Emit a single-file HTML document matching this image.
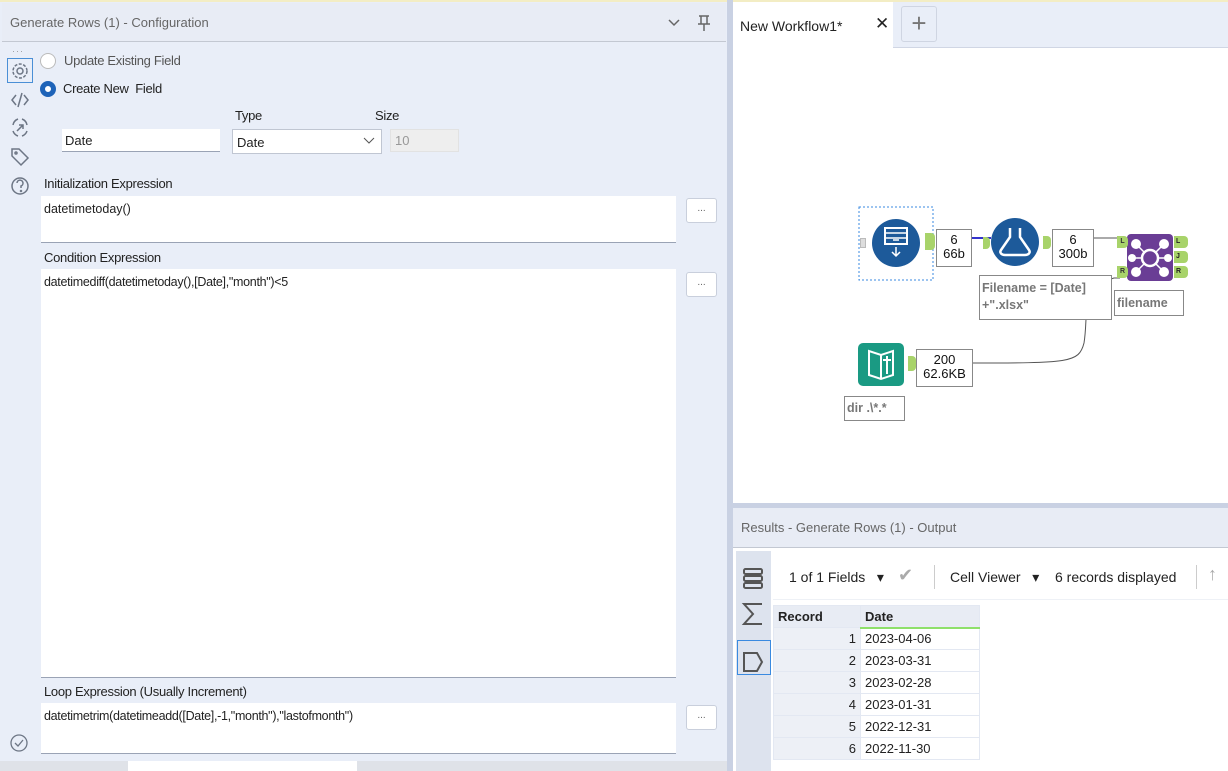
<!DOCTYPE html>
<html><head><meta charset="utf-8"><style>
*{box-sizing:border-box;margin:0;padding:0}
body{width:1228px;height:771px;overflow:hidden;background:#e9eef8;font-family:"Liberation Sans",sans-serif;font-size:13px;color:#222;position:relative}
.a{position:absolute}
.inp{position:absolute;background:#fff;border-bottom:1px solid #9aa3b5}
.btn{position:absolute;width:31px;height:25px;background:#fff;border:1px solid #c9cfdc;border-radius:3px;font-size:10px;color:#666;text-align:center;line-height:20px}
.lbl{position:absolute;font-size:13px;letter-spacing:-0.3px}
.ic{position:absolute;left:9px}
.box{position:absolute;background:#fff;border:1px solid #888;font-size:13px;text-align:center;line-height:14px;color:#111}
.port{position:absolute;background:#a8d36a;border-radius:0 4px 4px 0}
td{height:22px;border:1px solid #e3e8f2;font-size:13px}
</style></head><body>
<div class="a" style="left:0;top:0;width:1228px;height:2px;background:#f3edc4"></div>
<div class="a" style="left:2px;top:3px;width:724px;height:39px;background:#e8ecf5;border-bottom:1px solid #c3c8d2"></div>
<div class="a" style="left:10px;top:15px;font-size:13px;color:#666">Generate Rows (1) - Configuration</div>
<svg class="a" style="left:666px;top:14px" width="50" height="20"><path d="M3 6l5 5 5-5" stroke="#666" fill="none" stroke-width="1.5"/><path d="M33 2h10M35 2v8h6V2M32 10h12M38 10v7" stroke="#666" fill="none" stroke-width="1.5"/></svg>
<div class="a" style="left:12px;top:46px;font-size:9px;color:#999;letter-spacing:1px">···</div>
<div class="a" style="left:7px;top:58px;width:26px;height:25px;border:1px solid #4a8fd6"></div>
<svg class="ic" style="top:61px" width="22" height="140" fill="none" stroke="#6d7685" stroke-width="1.5">
<circle cx="11" cy="10" r="3"/><circle cx="11" cy="10" r="7" stroke-dasharray="3 1.5"/>
<path d="M7 34l-4 5 4 5M15 34l4 5-4 5M13 32l-4 14"/>
<path d="M4 64a8 8 0 0 1 5-6M13 58a8 8 0 0 1 5 6M18 70a8 8 0 0 1-5 5M9 75a8 8 0 0 1-5-5M8 70l6-6M10 64h4v4"/>
<path d="M3 88v7l9 9 7-7-9-9z"/><circle cx="7" cy="92" r="1"/>
<circle cx="11" cy="125" r="8"/>
<path d="M8 122a3 3 0 1 1 4 3v2"/><circle cx="12" cy="130" r="0.5"/>
</svg>
<svg class="a" style="left:10px;top:734px" width="20" height="20" fill="none" stroke="#6d7685" stroke-width="1.3"><circle cx="9" cy="9" r="8"/><path d="M5 9l3 3 5-6"/></svg>
<div class="a" style="left:40px;top:53px;width:16px;height:16px;border-radius:50%;background:#fff;border:1px solid #bbb"></div>
<div class="lbl" style="left:64px;top:53px;color:#555">Update Existing Field</div>
<div class="a" style="left:40px;top:81px;width:16px;height:16px;border-radius:50%;background:#fff;border:5px solid #1e63b8"></div>
<div class="lbl" style="left:63px;top:81px">Create New &nbsp;Field</div>
<div class="lbl" style="left:235px;top:108px">Type</div>
<div class="lbl" style="left:375px;top:108px">Size</div>
<div class="inp" style="left:62px;top:129px;width:158px;height:23px;padding:4px 3px">Date</div>
<div class="inp" style="left:232px;top:129px;width:150px;height:25px;padding:5px 4px;border:1px solid #c0c6d2">Date</div>
<svg class="a" style="left:363px;top:137px" width="12" height="8"><path d="M1 1l5 5 5-5" stroke="#555" fill="none"/></svg>
<div class="a" style="left:390px;top:129px;width:69px;height:23px;background:#eeeeee;border:1px solid #e2e2e2;color:#999;padding:3px 4px">10</div>
<div class="lbl" style="left:44px;top:176px;font-size:13px">Initialization Expression</div>
<div class="inp" style="left:41px;top:196px;width:635px;height:47px;padding:6px 3px;font-size:12.5px">datetimetoday()</div>
<div class="btn" style="left:686px;top:198px">...</div>
<div class="lbl" style="left:44px;top:250px">Condition Expression</div>
<div class="inp" style="left:41px;top:269px;width:635px;height:409px;padding:6px 3px;font-size:12.5px;letter-spacing:-0.3px">datetimediff(datetimetoday(),[Date],"month")&lt;5</div>
<div class="btn" style="left:686px;top:272px">...</div>
<div class="lbl" style="left:44px;top:684px">Loop Expression (Usually Increment)</div>
<div class="inp" style="left:41px;top:703px;width:635px;height:51px;padding:6px 3px;font-size:12.5px;letter-spacing:-0.3px">datetimetrim(datetimeadd([Date],-1,"month"),"lastofmonth")</div>
<div class="btn" style="left:686px;top:705px">...</div>
<div class="a" style="left:0;top:761px;width:728px;height:10px;background:#dfe2e8"></div>
<div class="a" style="left:128px;top:761px;width:229px;height:10px;background:#fff"></div>
<div class="a" style="left:727px;top:0;width:6px;height:771px;background:#c9d1e3"></div>
<div class="a" style="left:733px;top:2px;width:495px;height:46px;background:#e9eef8;border-bottom:1px solid #d0d6e4"></div>
<div class="a" style="left:733px;top:2px;width:160px;height:47px;background:#fff"></div>
<div class="a" style="left:740px;top:18px;font-size:14px;color:#222">New Workflow1*</div>
<div class="a" style="left:875px;top:14px;font-size:17px">✕</div>
<div class="a" style="left:901px;top:6px;width:36px;height:36px;border:1px solid #cfd5e2;border-radius:3px;text-align:center;font-size:26px;line-height:32px;color:#777">+</div>
<div class="a" style="left:733px;top:48px;width:495px;height:455px;background:#fff"></div>
<svg class="a" style="left:733px;top:48px" width="495" height="455">
<path d="M238 190h20" stroke="#33c" stroke-width="2"/>
<path d="M358 190h28" stroke="#555"/>
<path d="M236 315c100 0 110 0 115-20 5-30-5-55 30-65h6" stroke="#555" fill="none"/>
<rect x="126" y="159" width="74" height="73" fill="none" stroke="#3a8ae0" stroke-dasharray="2 2"/>
<circle cx="163" cy="195" r="24" fill="#1d5a9a"/>
<rect x="152" y="180" width="22" height="16" fill="none" stroke="#fff" stroke-width="2"/><path d="M152 185h22M152 190h22M163 199v8M159 204l4 4 4-4M160 192h6" stroke="#fff" stroke-width="1.5" fill="none"/>
<circle cx="282" cy="194" r="24" fill="#1d5a9a"/>
<path d="M277 180v9l-9 13c-2 3 1 5 4 5h20c3 0 6-2 4-5l-9-13v-9" stroke="#fff" stroke-width="2.5" fill="none"/>
<rect x="394" y="186" width="46" height="47" rx="4" fill="#6a3d95"/>
<path d="M403 196L431 224M431 196L403 224M399 210h36" stroke="#fff" stroke-width="1.5"/>
<circle cx="417" cy="210" r="8" fill="#6a3d95" stroke="#fff" stroke-width="2.5"/>
<g fill="#fff"><circle cx="403" cy="196" r="5"/><circle cx="431" cy="196" r="5"/><circle cx="403" cy="224" r="5"/><circle cx="431" cy="224" r="5"/><circle cx="399" cy="210" r="4"/><circle cx="435" cy="210" r="4"/></g>
<rect x="125" y="295" width="46" height="43" rx="5" fill="#1a9a83"/>
<path d="M136 303v24l12 4 12-4v-24l-12 4zM148 307v24M150 312h8M154 308v18" stroke="#fff" stroke-width="2" fill="none"/>
</svg>
<div class="a" style="left:860px;top:238px;width:6px;height:10px;background:#ddd;border:1px solid #bbb"></div>
<div class="port" style="left:925px;top:233px;width:10px;height:17px"></div>
<div class="port" style="left:983px;top:237px;width:7px;height:12px"></div>
<div class="port" style="left:1043px;top:236px;width:8px;height:13px"></div>
<div class="port" style="left:908px;top:356px;width:8px;height:15px"></div>
<div class="port" style="left:1117px;top:236px;width:11px;height:12px;font-size:7px;color:#333;font-weight:bold;text-align:center;line-height:12px">L</div>
<div class="port" style="left:1117px;top:266px;width:11px;height:12px;font-size:7px;color:#333;font-weight:bold;text-align:center;line-height:12px">R</div>
<div class="port" style="left:1174px;top:236px;width:14px;height:12px;font-size:7px;font-weight:bold;line-height:12px;padding-left:2px">L</div>
<div class="port" style="left:1174px;top:251px;width:14px;height:12px;font-size:7px;font-weight:bold;line-height:12px;padding-left:2px">J</div>
<div class="port" style="left:1174px;top:266px;width:14px;height:12px;font-size:7px;font-weight:bold;line-height:12px;padding-left:2px">R</div>
<div class="box" style="left:936px;top:229px;width:36px;height:38px;padding-top:3px">6<br>66b</div>
<div class="box" style="left:1052px;top:229px;width:42px;height:38px;padding-top:3px">6<br>300b</div>
<div class="box" style="left:916px;top:349px;width:57px;height:38px;padding-top:3px">200<br>62.6KB</div>
<div class="box" style="left:979px;top:275px;width:133px;height:45px;text-align:left;padding:4px 2px;color:#777;font-weight:bold;font-size:12.5px;line-height:17px">Filename = [Date]<br>+".xlsx"</div>
<div class="box" style="left:1114px;top:290px;width:70px;height:26px;text-align:left;padding:5px 2px;color:#777;font-weight:bold;font-size:12.5px">filename</div>
<div class="box" style="left:844px;top:396px;width:61px;height:25px;text-align:left;padding:4px 2px;color:#777;font-weight:bold;font-size:12.5px">dir .\*.*</div>
<div class="a" style="left:733px;top:503px;width:495px;height:5px;background:#c9d1e3"></div>
<div class="a" style="left:733px;top:508px;width:495px;height:40px;background:#e8ecf5;border-bottom:1px solid #c3c8d2"></div>
<div class="a" style="left:741px;top:520px;font-size:13px;color:#666">Results - Generate Rows (1) - Output</div>
<div class="a" style="left:733px;top:548px;width:495px;height:223px;background:#fff"></div>
<div class="a" style="left:736px;top:551px;width:35px;height:220px;background:#dde3ee"></div>
<svg class="a" style="left:737px;top:563px" width="36" height="115" fill="none" stroke="#555" stroke-width="2">
<rect x="7" y="6" width="18" height="5" rx="1.5"/><rect x="7" y="13" width="18" height="5" rx="1.5"/><rect x="7" y="20" width="18" height="5" rx="1.5"/>
<path d="M25 41H7l9 10-9 10h18"/>
<path d="M7 90h13l5 9-5 9H7z"/>
</svg>
<div class="a" style="left:737px;top:640px;width:34px;height:35px;border:1px solid #3a8ae0"></div>
<div class="a" style="left:773px;top:555px;width:455px;height:45px;background:#fff;border-bottom:1px solid #eef1f6"></div>
<div class="a" style="left:789px;top:569px;font-size:14px">1 of 1 Fields &nbsp;&nbsp;▾</div>
<div class="a" style="left:898px;top:565px;font-size:18px;color:#aaa">✔</div>
<div class="a" style="left:934px;top:565px;width:1px;height:24px;background:#ccc"></div>
<div class="a" style="left:950px;top:569px;font-size:14px">Cell Viewer &nbsp;&nbsp;▾</div>
<div class="a" style="left:1055px;top:569px;font-size:14px">6 records displayed</div>
<div class="a" style="left:1196px;top:565px;width:1px;height:24px;background:#ccc"></div>
<div class="a" style="left:1208px;top:564px;font-size:18px;color:#aaa">↑</div>
<table class="a" style="left:773px;top:605px;border-collapse:collapse">
<tr><td style="width:87px;background:#e8ecf4;font-weight:bold;padding-left:4px">Record</td><td style="width:119px;background:#e8ecf4;font-weight:bold;padding-left:4px;border-bottom:2px solid #8ee06a">Date</td></tr>
<tr><td style="background:#edf0f6;text-align:right;padding-right:4px">1</td><td style="padding-left:4px">2023-04-06</td></tr>
<tr><td style="background:#edf0f6;text-align:right;padding-right:4px">2</td><td style="padding-left:4px">2023-03-31</td></tr>
<tr><td style="background:#edf0f6;text-align:right;padding-right:4px">3</td><td style="padding-left:4px">2023-02-28</td></tr>
<tr><td style="background:#edf0f6;text-align:right;padding-right:4px">4</td><td style="padding-left:4px">2023-01-31</td></tr>
<tr><td style="background:#edf0f6;text-align:right;padding-right:4px">5</td><td style="padding-left:4px">2022-12-31</td></tr>
<tr><td style="background:#edf0f6;text-align:right;padding-right:4px">6</td><td style="padding-left:4px">2022-11-30</td></tr>
</table>
</body></html>
